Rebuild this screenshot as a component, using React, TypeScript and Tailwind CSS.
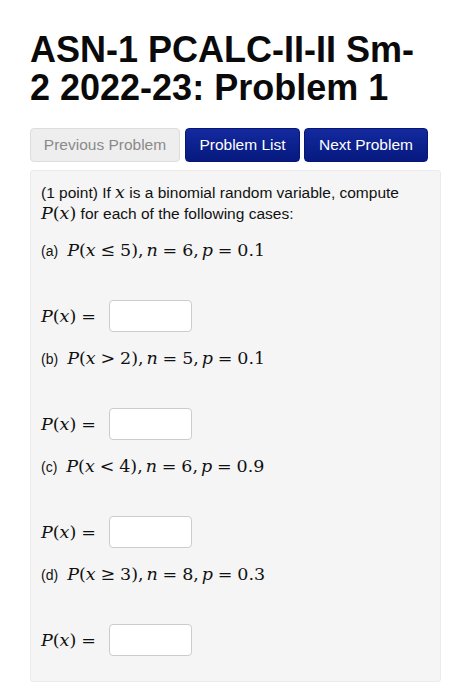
import React from 'react'

const serif = { fontFamily: '"DejaVu Serif", "Liberation Serif", serif' }

function V({ children }: { children: React.ReactNode }) {
  return <span className="italic">{children}</span>
}

function Rel({ children }: { children: React.ReactNode }) {
  return <span className="mx-[0.2778em]">{children}</span>
}

function Comma() {
  return <span className="mr-[0.1667em]">,</span>
}

function Math({ children }: { children: React.ReactNode }) {
  return (
    <span className="text-[17.5px] leading-none whitespace-nowrap" style={serif}>
      {children}
    </span>
  )
}

const Px = () => (
  <Math>
    <V>P</V>(<V>x</V>)
  </Math>
)

interface Part {
  label: string
  rel: string
  k: string
  n: string
  p: string
}

const parts: Part[] = [
  { label: '(a)', rel: '≤', k: '5', n: '6', p: '0.1' },
  { label: '(b)', rel: '>', k: '2', n: '5', p: '0.1' },
  { label: '(c)', rel: '<', k: '4', n: '6', p: '0.9' },
  { label: '(d)', rel: '≥', k: '3', n: '8', p: '0.3' },
]

function PartBlock({ part }: { part: Part }) {
  return (
    <div>
      <div className="leading-[21px] mt-[17px] flex items-baseline">
        <span className="text-[14px] mr-[9px]">{part.label}</span>
        <Math>
          <V>P</V>(<V>x</V>
          <Rel>{part.rel}</Rel>
          {part.k})<Comma />
          <V>n</V>
          <Rel>=</Rel>
          {part.n}
          <Comma />
          <V>p</V>
          <Rel>=</Rel>
          {part.p}
        </Math>
      </div>
      <div className="mt-[38px] flex items-center h-[32px]">
        <span className="whitespace-nowrap">
          <Px />
          <span className="text-[17.5px]" style={serif}>
            <Rel>=</Rel>
          </span>
        </span>
        <input
          type="text"
          className="ml-[8px] w-[83px] h-[32px] bg-white border border-[#cccccc] rounded-[4px] outline-none"
        />
      </div>
    </div>
  )
}

export default function App() {
  return (
    <div
      className="min-h-[700px] bg-white text-[#111] px-[30px] pt-[31px]"
      style={{ fontFamily: '"Liberation Sans", Arial, sans-serif' }}
    >
      <h1 className="text-[36px] leading-[38px] font-bold text-[#0a0a0a]">
        ASN-1 PCALC-II-II Sm-
        <br />
        2 2022-23: Problem 1
      </h1>

      <div className="mt-[21px] flex gap-[5px] text-[15.5px]">
        <button className="w-[150px] h-[34px] rounded-[4px] bg-[#eeeeee] border border-[#dddddd] text-[#8a8a8a]">
          Previous Problem
        </button>
        <button className="w-[115px] h-[34px] rounded-[4px] bg-gradient-to-b from-[#14299e] to-[#06197f] border border-[#061672] text-white">
          Problem List
        </button>
        <button className="w-[124px] h-[34px] -ml-[1px] rounded-[4px] bg-gradient-to-b from-[#14299e] to-[#06197f] border border-[#061672] text-white">
          Next Problem
        </button>
      </div>

      <div className="mt-[8px] w-[411px] bg-[#f5f5f5] border border-[#ebebeb] rounded-[3px] pl-[10px] pr-[10px] pt-[11px] pb-[25px] text-[15.5px] text-[#111]">
        <p className="leading-[21px]">
          (1 point) If{' '}
          <span className="text-[17.5px] leading-none italic" style={serif}>
            x
          </span>{' '}
          is a binomial random variable, compute
          <br />
          <Px /> for each of the following cases:
        </p>
        {parts.map((p) => (
          <PartBlock key={p.label} part={p} />
        ))}
      </div>
    </div>
  )
}
